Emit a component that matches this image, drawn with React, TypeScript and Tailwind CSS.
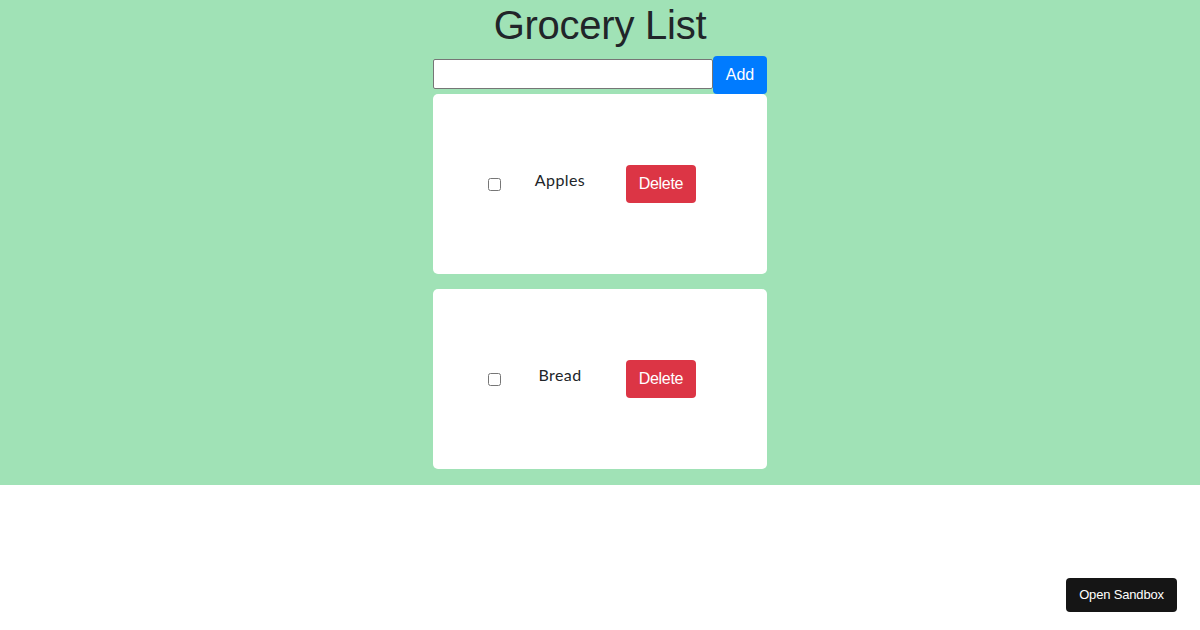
import React from 'react';

const items = ['Apples', 'Bread'];

function GroceryItem({ name }: { name: string }) {
  return (
    <li className="flex h-[180px] items-center rounded-[5px] bg-white pl-[55px]">
      <input type="checkbox" className="h-[13px] w-[13px]" />
      <span className="ml-[23px] mb-2 w-[72px] text-center font-['Lato',sans-serif] text-[16px] font-normal tracking-[0.4px] text-[#212529]">
        {name}
      </span>
      <button className="ml-[30px] h-[38px] w-[70px] rounded-[4px] bg-[#dc3545] text-base tracking-[-0.3px] text-white">
        Delete
      </button>
    </li>
  );
}

export default function App() {
  return (
    <div className="relative h-[630px] w-[1200px] bg-white font-['Liberation_Sans',sans-serif] text-[#212529]">
      <div className="flex h-[485px] flex-col items-center bg-[#a0e2b6]">
        <h1 className="h-[56px] text-[40px] leading-[50px] font-normal tracking-[-0.25px]">Grocery List</h1>
        <div className="w-[334px]">
          <div className="flex items-center">
            <input
              type="text"
              className="mb-[2px] h-[30px] w-[280px] rounded-[2px] border border-[#767676] bg-white"
            />
            <button className="h-[38px] w-[54px] rounded-[4px] bg-[#007bff] text-base text-white">
              Add
            </button>
          </div>
          <ul className="flex flex-col gap-[15px]">
            {items.map((item) => (
              <GroceryItem key={item} name={item} />
            ))}
          </ul>
        </div>
      </div>
      <button className="absolute bottom-[18px] right-[23px] h-[34px] w-[111px] rounded-[4px] bg-[#151515] text-[13px] tracking-[-0.17px] text-white">
        Open Sandbox
      </button>
    </div>
  );
}
